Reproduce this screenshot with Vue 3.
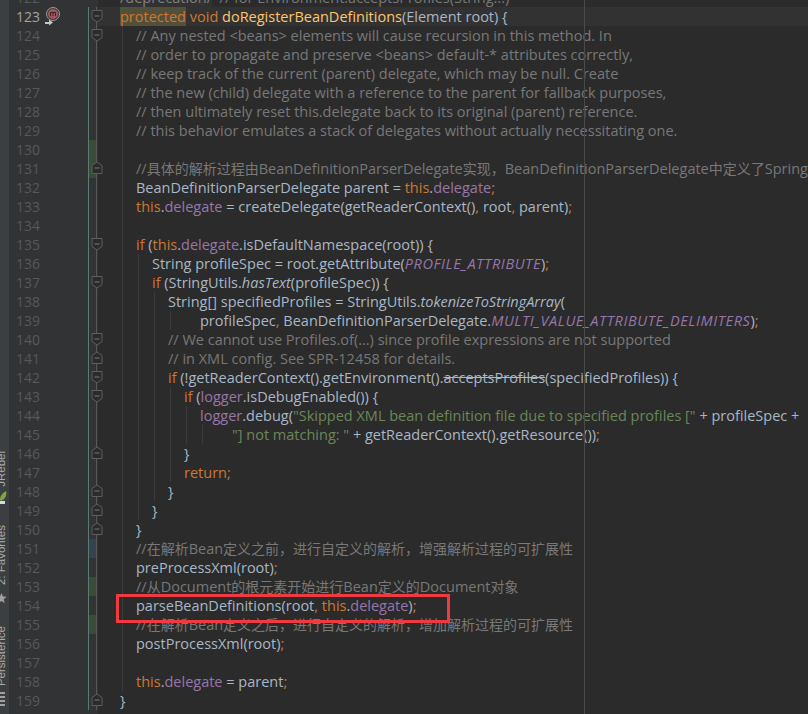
<template>
  <div class="ide">
    <div class="tool-strip">
      <span class="tool-label">JRebel</span>
      <svg class="tool-icon leaf" width="10" height="14" viewBox="0 0 10 14">
        <path d="M0 9C0 4 3 2 6 0C7 3 6 8 1 10Z" fill="#7fa53c" />
        <rect x="0" y="10" width="5" height="3" fill="#d8d8d8" />
      </svg>
      <span class="tool-label favorites">2: Favorites</span>
      <svg class="tool-icon star" width="10" height="10" viewBox="0 0 10 10">
        <path d="M1.5 0L3 3.4L6.5 3.8L3.8 6.2L4.6 10L1.5 8L-1.6 10L-.8 6.2L-3.5 3.8L0 3.4Z" fill="#a0a0a0" />
      </svg>
      <span class="tool-label persistence">Persistence</span>
      <div class="bars"><i v-for="n in 4" :key="n"></i></div>
    </div>

    <div class="gutter">
      <div v-for="line in lines" :key="line.no" class="gutter-row" :class="{ active: line.no === 123, ruled: line.no > 122 }">
        <span class="line-no">{{ line.no }}</span>
        <span class="change" :class="changes[line.no]"></span>
        <svg v-if="folds[line.no]" class="fold" width="12" height="14" viewBox="0 0 12 14">
          <path :d="foldPaths[folds[line.no]]" fill="#2b2b2b" stroke="#5c5e5f" />
          <path d="M3.5 7H8.5" stroke="#77797a" />
        </svg>
      </div>
      <svg class="breakpoint" width="18" height="20" viewBox="0 0 18 20">
        <circle cx="9" cy="8" r="6.5" fill="#3a3c3e" stroke="#9a9a9a" />
        <circle cx="9" cy="8" r="5" fill="#a5525e" />
        <path d="M6.5 10V6.5H11.5V10M9 6.5V10" fill="none" stroke="#3b2226" />
        <path d="M1 16H5V13.5L9 16.5L5 19.5V18H1Z" fill="#c4c6c8" />
      </svg>
    </div>

    <div class="editor">
      <div
        v-for="line in lines"
        :key="line.no"
        class="code-row"
        :class="{ current: line.no === 123 }"
        :style="{ paddingLeft: line.indent * 16 + 'px' }"
      >
        <span v-for="(part, i) in parse(line.text)" :key="i" :class="part.cls">{{ part.text }}</span>
      </div>
      <i v-for="g in guides" :key="g.x + '-' + g.from" class="guide" :style="guideStyle(g)"></i>
      <i class="right-margin"></i>
      <div class="red-box"></div>
    </div>
  </div>
</template>

<script setup>
// {x|text} marks a token, bare ; and , come out orange like in Darcula
const source = [
  [122, 0, '{dep|/deprecation/}  {c|// for Environment.acceptsProfiles(String...)}'],
  [123, 0, '{hl|protected} {k|void} {m|doRegisterBeanDefinitions}(Element root) {'],
  [124, 1, '{c|// Any nested <beans> elements will cause recursion in this method. In}'],
  [125, 1, '{c|// order to propagate and preserve <beans> default-* attributes correctly,}'],
  [126, 1, '{c|// keep track of the current (parent) delegate, which may be null. Create}'],
  [127, 1, '{c|// the new (child) delegate with a reference to the parent for fallback purposes,}'],
  [128, 1, '{c|// then ultimately reset this.delegate back to its original (parent) reference.}'],
  [129, 1, '{c|// this behavior emulates a stack of delegates without actually necessitating one.}'],
  [130, 0, ''],
  [131, 1, '{c|//具体的解析过程由BeanDefinitionParserDelegate实现，BeanDefinitionParserDelegate中定义了Spring Bean定义XML文件的各种元素}'],
  [132, 1, 'BeanDefinitionParserDelegate parent = {k|this}.{f|delegate};'],
  [133, 1, '{k|this}.{f|delegate} = createDelegate(getReaderContext(), root, parent);'],
  [134, 0, ''],
  [135, 1, '{k|if} ({k|this}.{f|delegate}.isDefaultNamespace(root)) {'],
  [136, 2, 'String profileSpec = root.getAttribute({fi|PROFILE_ATTRIBUTE});'],
  [137, 2, '{k|if} (StringUtils.{i|hasText}(profileSpec)) {'],
  [138, 3, 'String[] specifiedProfiles = StringUtils.{i|tokenizeToStringArray}('],
  [139, 5, 'profileSpec, BeanDefinitionParserDelegate.{fi|MULTI_VALUE_ATTRIBUTE_DELIMITERS});'],
  [140, 3, '{c|// We cannot use Profiles.of(...) since profile expressions are not supported}'],
  [141, 3, '{c|// in XML config. See SPR-12458 for details.}'],
  [142, 3, '{k|if} (!getReaderContext().getEnvironment().{s|acceptsProfiles}(specifiedProfiles)) {'],
  [143, 4, '{k|if} ({f|logger}.isDebugEnabled()) {'],
  [144, 5, '{f|logger}.debug({t|"Skipped XML bean definition file due to specified profiles ["} + profileSpec +'],
  [145, 7, '{t|"] not matching: "} + getReaderContext().getResource());'],
  [146, 4, '}'],
  [147, 4, '{k|return};'],
  [148, 3, '}'],
  [149, 2, '}'],
  [150, 1, '}'],
  [151, 1, '{c|//在解析Bean定义之前，进行自定义的解析，增强解析过程的可扩展性}'],
  [152, 1, 'preProcessXml(root);'],
  [153, 1, '{c|//从Document的根元素开始进行Bean定义的Document对象}'],
  [154, 1, 'parseBeanDefinitions(root, {k|this}.{f|delegate});'],
  [155, 1, '{c|//在解析Bean定义之后，进行自定义的解析，增加解析过程的可扩展性}'],
  [156, 1, 'postProcessXml(root);'],
  [157, 0, ''],
  [158, 1, '{k|this}.{f|delegate} = parent;'],
  [159, 0, '{brace|\u007D}']
]

const lines = source.map(([no, indent, text]) => ({ no, indent, text }))

const changes = { 130: 'added', 131: 'added', 151: 'edited', 153: 'added', 155: 'added' }

const folds = {
  123: 'down', 124: 'down', 131: 'up', 135: 'down', 137: 'down', 140: 'down',
  141: 'up', 142: 'down', 143: 'down', 146: 'up', 148: 'up', 149: 'up', 150: 'up', 159: 'up'
}

const foldPaths = {
  down: 'M1 1.5H11V9.5L6 13L1 9.5Z',
  up: 'M1 12.5H11V4.5L6 1L1 4.5Z'
}

const guides = [
  { x: 122, from: 124, to: 158 },
  { x: 138, from: 136, to: 149 },
  { x: 154, from: 138, to: 148 },
  { x: 170, from: 139, to: 139 },
  { x: 170, from: 143, to: 147 },
  { x: 186, from: 144, to: 145 },
  { x: 202, from: 145, to: 145 }
]

const guideStyle = (g) => ({
  left: g.x - 98 + 'px',
  top: (g.from - 123) * 19 + 19 + 'px',
  height: (g.to - g.from + 1) * 19 + 'px'
})

const parse = (text) => {
  const parts = []
  const re = /\{(\w+)\|([^}]*)\}|([;,])|([^{;,]+|\{)/g
  let m
  while ((m = re.exec(text))) {
    if (m[1] === 'c') {
      // chinese runs are drawn a bit smaller than the latin text
      m[2].split(/([\u4e00-\u9fff，]+)/).forEach((run, i) => {
        if (run) parts.push({ cls: i % 2 ? 'c cjk' : 'c', text: run })
      })
    } else if (m[1]) parts.push({ cls: m[1], text: m[2] })
    else if (m[3]) parts.push({ cls: 'k', text: m[3] })
    else parts.push({ cls: '', text: m[4] })
  }
  return parts
}
</script>

<style>
html,
body {
  background: #2b2b2b;
  overflow: hidden;
}
</style>

<style scoped>
.ide {
  display: flex;
  height: 714px;
  width: 808px;
  overflow: hidden;
  font-family: "Open Sans", "Noto Sans CJK SC", sans-serif;
  font-size: 14.5px;
  background: #2b2b2b;
}

.tool-strip {
  width: 9px;
  flex-shrink: 0;
  display: flex;
  flex-direction: column;
  padding-top: 451px;
  background: #3c3f41;
  border-right: 1px solid #2f3133;
  overflow: hidden;
}

.tool-label {
  writing-mode: vertical-rl;
  transform: rotate(180deg);
  font-size: 11.5px;
  line-height: 16px;
  width: 16px;
  margin-left: -7px;
  color: #a8abad;
  white-space: nowrap;
  font-family: "Liberation Sans", sans-serif;
}

.tool-icon {
  flex-shrink: 0;
  display: block;
}

.leaf {
  margin-top: 4px;
}

.favorites {
  margin-top: 20px;
}

.star {
  margin-top: 8px;
}

.persistence {
  margin-top: 23px;
}

.bars {
  margin-top: 6px;
  display: flex;
  flex-direction: column;
  gap: 2px;
}

.bars i {
  display: block;
  width: 5px;
  height: 2px;
  background: #a0a0a0;
}

.gutter {
  position: relative;
  width: 88px;
  flex-shrink: 0;
  margin-top: -12px;
  padding-bottom: 20px;
  background: #313335;
}

.gutter-row {
  position: relative;
  display: flex;
  height: 19px;
}

.line-no {
  width: 78px;
  padding-left: 6px;
  box-sizing: border-box;
  font-size: 14px;
  line-height: 19px;
  color: #55595b;
}

.active .line-no {
  color: #a4a3a3;
}

.change {
  width: 9px;
  box-sizing: border-box;
  flex-shrink: 0;
}

.ruled .change {
  border-left: 1px solid #5d7a72;
  border-right: 1px solid #565859;
}

.change.added {
  background: #384c38;
}

.change.edited {
  background: #33434f;
}

.fold {
  position: absolute;
  left: 81px;
  top: 2px;
  z-index: 2;
}

.breakpoint {
  position: absolute;
  left: 34px;
  top: 18px;
}

.editor {
  position: relative;
  flex: 1;
  margin-top: -12px;
  min-width: 0;
  padding-left: 22px;
  overflow: hidden;
}

.code-row {
  height: 19px;
  line-height: 19px;
  white-space: pre;
  color: #a9b7c6;
  margin-left: -22px;
  border-left: 22px solid transparent;
}

.code-row.current {
  background: #323232;
}

.k {
  color: #cc7832;
}

.m {
  color: #ffc66d;
}

.c {
  color: #787878;
}

.cjk {
  font-size: 14px;
}

.f {
  color: #9876aa;
}

.fi {
  color: #9876aa;
  font-style: italic;
  letter-spacing: 0.6px;
}

.i {
  font-style: italic;
}

.t {
  color: #6a8759;
}

.s {
  text-decoration: line-through;
}

.hl {
  color: #cc7832;
  background: #52503a;
}

.dep {
  color: #808080;
  background: #323232;
}

.brace {
  color: #a9b7c6;
  background: #3b514d;
}

.guide {
  position: absolute;
  width: 1px;
  background: #3b3b3b;
}

.right-margin {
  position: absolute;
  left: 486px;
  top: 0;
  bottom: 0;
  width: 1px;
  background: #4a4a4a;
}

.red-box {
  position: absolute;
  left: 18px;
  top: 606px;
  width: 334px;
  height: 29px;
  box-sizing: border-box;
  border: 3px solid #f03a3f;
}
</style>
